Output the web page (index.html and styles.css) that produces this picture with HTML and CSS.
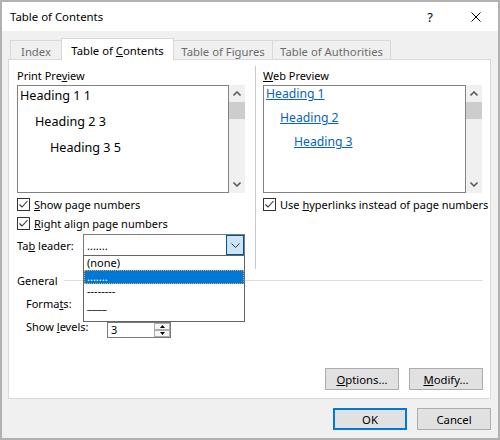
FILE: index.html
```html
<!DOCTYPE html>
<html lang="en">
<head>
    <meta charset="UTF-8">
    <title>Table of Contents</title>
    <link rel="stylesheet" href="styles.css">
</head>
<body>
    <div class="dialog">
        <div class="titlebar">
            <span class="title">Table of Contents</span>
            <span class="help">?</span>
            <span class="close">
                <svg width="10" height="10" viewBox="0 0 10 10"><path d="M0.5 0.5 L9.5 9.5 M9.5 0.5 L0.5 9.5" stroke="#000" stroke-width="1" fill="none"/></svg>
            </span>
        </div>

        <div class="client">
            <div class="tabs">
                <div class="tab tab-index"><span>Index</span></div>
                <div class="tab tab-toc active"><span>Table of <u>C</u>ontents</span></div>
                <div class="tab tab-tof"><span>Table of Figures</span></div>
                <div class="tab tab-toa"><span>Table of Authorities</span></div>
            </div>

            <div class="panel">
                <div class="top">
                    <div class="col-left">
                        <div class="label">Print Pre<u>v</u>iew</div>
                        <div class="preview">
                            <div class="preview-box print">
                                <div class="ph ph1">Heading 1 1</div>
                                <div class="ph ph2">Heading 2 3</div>
                                <div class="ph ph3">Heading 3 5</div>
                            </div>
                            <div class="scrollbar">
                                <div class="sb-arrow"><svg width="8" height="5" viewBox="0 0 8 5"><polyline points="0.5,4.5 4,1 7.5,4.5" fill="none" stroke="#606060" stroke-width="1.6"/></svg></div>
                                <div class="sb-thumb"></div>
                                <div class="sb-track"></div>
                                <div class="sb-arrow"><svg width="8" height="5" viewBox="0 0 8 5"><polyline points="0.5,0.5 4,4 7.5,0.5" fill="none" stroke="#606060" stroke-width="1.6"/></svg></div>
                            </div>
                        </div>
                        <div class="check first">
                            <span class="box"><svg width="11" height="11" viewBox="0 0 11 11"><polyline points="1.5,5.5 4,8 9.5,2" fill="none" stroke="#333" stroke-width="1.1"/></svg></span>
                            <span><u>S</u>how page numbers</span>
                        </div>
                        <div class="check">
                            <span class="box"><svg width="11" height="11" viewBox="0 0 11 11"><polyline points="1.5,5.5 4,8 9.5,2" fill="none" stroke="#333" stroke-width="1.1"/></svg></span>
                            <span><u>R</u>ight align page numbers</span>
                        </div>
                        <div class="leader-row">
                            <span class="leader-label">Ta<u>b</u> leader:</span>
                            <div class="combo">
                                <span class="combo-text">.......</span>
                                <span class="combo-btn"><svg width="9" height="5" viewBox="0 0 9 5"><polyline points="0.5,0.5 4.5,4.5 8.5,0.5" fill="none" stroke="#333" stroke-width="1"/></svg></span>
                                <div class="dropdown">
                                    <div class="item">(none)</div>
                                    <div class="item selected">.......</div>
                                    <div class="item">--------</div>
                                    <div class="item">____</div>
                                </div>
                            </div>
                        </div>
                    </div>

                    <div class="vsep"></div>

                    <div class="col-right">
                        <div class="label"><u>W</u>eb Preview</div>
                        <div class="preview">
                            <div class="preview-box web">
                                <a class="wh wh1">Heading 1</a>
                                <a class="wh wh2">Heading 2</a>
                                <a class="wh wh3">Heading 3</a>
                            </div>
                            <div class="scrollbar">
                                <div class="sb-arrow"><svg width="8" height="5" viewBox="0 0 8 5"><polyline points="0.5,4.5 4,1 7.5,4.5" fill="none" stroke="#606060" stroke-width="1.6"/></svg></div>
                                <div class="sb-thumb"></div>
                                <div class="sb-track"></div>
                                <div class="sb-arrow"><svg width="8" height="5" viewBox="0 0 8 5"><polyline points="0.5,0.5 4,4 7.5,0.5" fill="none" stroke="#606060" stroke-width="1.6"/></svg></div>
                            </div>
                        </div>
                        <div class="check first">
                            <span class="box"><svg width="11" height="11" viewBox="0 0 11 11"><polyline points="1.5,5.5 4,8 9.5,2" fill="none" stroke="#333" stroke-width="1.1"/></svg></span>
                            <span>Use <u>h</u>yperlinks instead of page numbers</span>
                        </div>
                    </div>
                </div>

                <div class="general-head">General</div>
                <div class="field-row formats">
                    <span class="field-label">Forma<u>t</u>s:</span>
                    <div class="combo small"><span class="combo-text">From template</span></div>
                </div>
                <div class="field-row levels">
                    <span class="field-label">Show <u>l</u>evels:</span>
                    <div class="spinner">
                        <span class="spin-value">3</span>
                        <span class="spin-btns">
                            <span class="spin-up"><svg width="5" height="3" viewBox="0 0 5 3"><polygon points="0,3 2.5,0 5,3" fill="#000"/></svg></span>
                            <span class="spin-down"><svg width="5" height="3" viewBox="0 0 5 3"><polygon points="0,0 2.5,3 5,0" fill="#000"/></svg></span>
                        </span>
                    </div>
                </div>

                <div class="panel-buttons">
                    <button class="btn"><u>O</u>ptions...</button>
                    <button class="btn"><u>M</u>odify...</button>
                </div>
            </div>

            <div class="footer">
                <button class="btn default">OK</button>
                <button class="btn">Cancel</button>
            </div>
        </div>
    </div>
</body>
</html>
```

FILE: styles.css
```css
* {
    margin: 0;
    padding: 0;
    box-sizing: border-box;
}

body {
    font-family: "Noto Sans", "Open Sans", sans-serif;
    font-size: 11px;
    color: #000;
    background: #fff;
    white-space: nowrap;
}

.dialog {
    width: 500px;
    height: 440px;
    border: 2px solid #b1b1b1;
    display: flex;
    flex-direction: column;
}

/* title bar */
.titlebar {
    height: 29px;
    background: #fff;
    display: flex;
    align-items: center;
    padding-left: 8px;
}

.title {
    flex: 1;
    font-size: 11.4px;
}

.help {
    width: 46px;
    text-align: center;
    font-size: 13px;
}

.close {
    width: 45px;
    display: flex;
    justify-content: center;
}

/* client area */
.client {
    flex: 1;
    background: #f0f0f0;
    display: flex;
    flex-direction: column;
}

.tabs {
    display: flex;
    align-items: flex-end;
    height: 21px;
    margin: 7px 0 0 8px;
    position: relative;
    z-index: 1;
}

.tab {
    height: 19px;
    border: 1px solid #d9d9d9;
    border-bottom: none;
    background: #f0f0f0;
    color: #6d6d6d;
    display: flex;
    align-items: center;
    justify-content: center;
    margin-left: -1px;
    padding-top: 2px;
    font-size: 11.3px;
}

.tab-index { width: 52px; margin-left: 0; }
.tab-toc { width: 113px; }
.tab-tof { width: 100px; }
.tab-toa { width: 119px; }

.tab.active {
    height: 22px;
    margin-bottom: -1px;
    background: #fff;
    color: #000;
    position: relative;
    z-index: 2;
}

.panel {
    margin-left: 6px;
    width: 483px;
    height: 340px;
    background: #fff;
    border: 1px solid #d9d9d9;
    display: flex;
    flex-direction: column;
    padding: 7px 7px 8px 8px;
}

.top {
    display: flex;
    height: 202px;
}

.col-left {
    width: 228px;
    flex: none;
}

.col-right {
    width: 219px;
    flex: none;
}

.vsep {
    width: 1px;
    background: #c8c8c8;
    margin: -1px 7px 0 10px;
}

.label {
    height: 16px;
    line-height: 16px;
    margin-top: 1px;
    margin-bottom: 1px;
}

/* preview boxes */
.preview {
    display: flex;
    height: 108px;
}

.preview-box {
    flex: 1;
    border: 1px solid #828282;
    background: #fff;
    overflow: hidden;
}

.ph {
    font-size: 12.6px;
    line-height: 26px;
}

.ph1 { padding-left: 2px; margin-top: -3px; }
.ph2 { padding-left: 17px; }
.ph3 { padding-left: 32px; }

.wh {
    display: block;
    width: max-content;
    font-size: 12.2px;
    line-height: 16px;
    margin-bottom: 8px;
    color: #0563c1;
    text-decoration: underline;
}

.wh1 { margin-left: 2px; }
.wh2 { margin-left: 16px; }
.wh3 { margin-left: 30px; }

.scrollbar {
    width: 16px;
    flex: none;
    background: #f0f0f0;
    display: flex;
    flex-direction: column;
}

.sb-arrow {
    height: 17px;
    display: flex;
    align-items: center;
    justify-content: center;
}

.sb-thumb {
    height: 17px;
    background: #cdcdcd;
}

.sb-track {
    flex: 1;
}

/* checkboxes */
.check {
    display: flex;
    align-items: center;
    height: 19px;
}

.check.first {
    margin-top: 2px;
}

.box {
    width: 13px;
    height: 13px;
    flex: none;
    border: 1px solid #333;
    background: #fff;
    margin-right: 4px;
    display: flex;
}

/* combo boxes */
.leader-row {
    display: flex;
    align-items: center;
    height: 22px;
    margin-top: 1px;
}

.leader-label {
    width: 66px;
}

.combo {
    position: relative;
    width: 162px;
    height: 22px;
    border: 1px solid #7a7a7a;
    background: #fff;
    display: flex;
    align-items: center;
}

.combo-text {
    flex: 1;
    padding-left: 3px;
}

.combo-btn {
    width: 18px;
    height: 20px;
    background: #cce4f7;
    border: 1px solid #005499;
    display: flex;
    align-items: center;
    justify-content: center;
}

.dropdown {
    position: absolute;
    left: -1px;
    top: 20px;
    width: 162px;
    height: 67px;
    border: 1px solid #646464;
    background: #fff;
    z-index: 5;
}

.item {
    height: 14px;
    line-height: 14px;
    padding-left: 3px;
}

.item.selected {
    background: #0078d7;
    color: #fff;
    border: 1px dotted #f7a14a;
    line-height: 12px;
    padding-left: 2px;
}

/* general section */
.general-head {
    display: flex;
    align-items: center;
    height: 16px;
    margin-top: 3px;
}

.general-head::after {
    content: "";
    flex: 1;
    height: 1px;
    background: #dcdcdc;
    margin-left: 6px;
}

.field-row {
    display: flex;
    padding-left: 9px;
}

.field-label {
    width: 81px;
    line-height: 16px;
}

.formats {
    margin-top: 8px;
    height: 16px;
    align-items: center;
}

.combo.small {
    width: 120px;
    height: 21px;
}

.levels {
    margin-top: 7px;
    height: 19px;
    align-items: flex-start;
}

.spinner {
    margin-top: 3px;
    width: 64px;
    height: 16px;
    border: 1px solid #7a7a7a;
    display: flex;
}

.spin-value {
    flex: 1;
    padding-left: 3px;
    line-height: 14px;
}

.spin-btns {
    width: 16px;
    display: flex;
    flex-direction: column;
}

.spin-up,
.spin-down {
    flex: 1;
    border: 1px solid #adadad;
    background: #f6f6f6;
    display: flex;
    align-items: center;
    justify-content: center;
}

/* buttons */
.panel-buttons {
    margin-top: auto;
    align-self: flex-end;
    display: flex;
    gap: 10px;
}

.btn {
    width: 74px;
    height: 22px;
    font-family: inherit;
    font-size: 11.3px;
    color: #000;
    background: #e1e1e1;
    border: 1px solid #adadad;
}

.btn.default {
    border: 2px solid #0078d7;
}

.footer {
    display: flex;
    justify-content: flex-end;
    gap: 10px;
    margin-top: 9px;
    padding-right: 7px;
}
```
